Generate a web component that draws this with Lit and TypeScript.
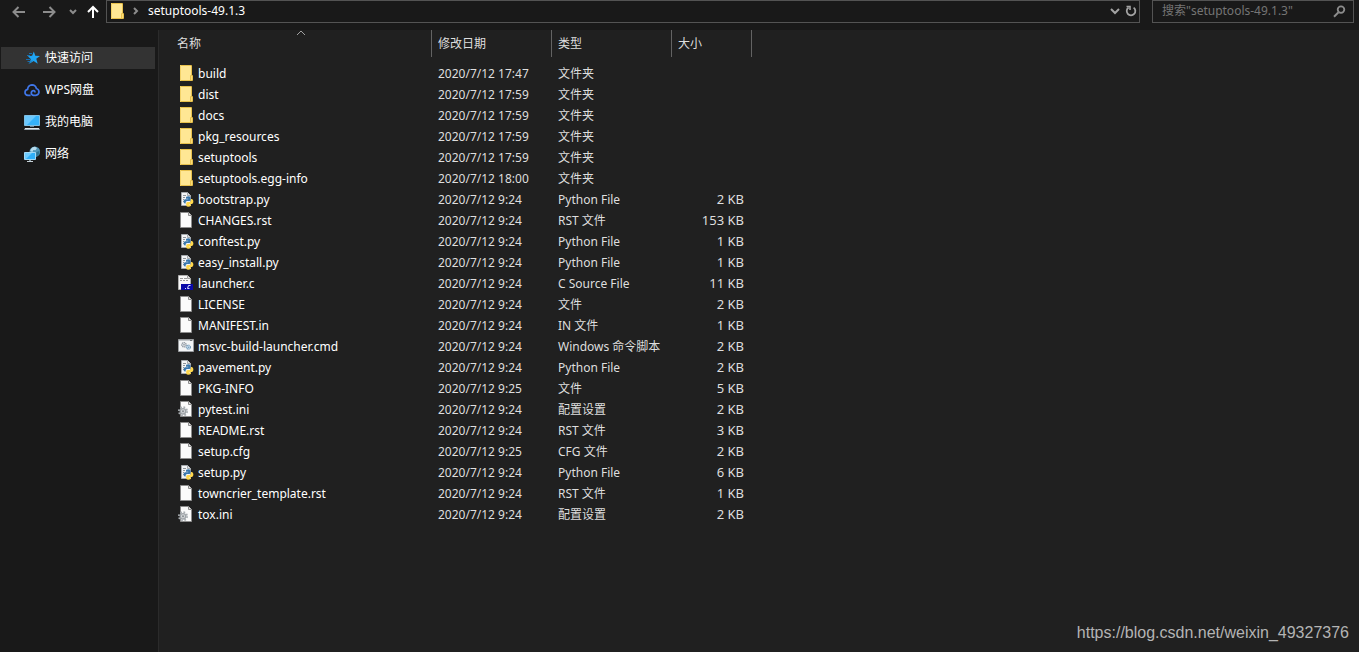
import { LitElement, html, svg, css, nothing, type TemplateResult } from "lit";
import { customElement, property } from "lit/decorators.js";

type IconName = "folder" | "python" | "blank" | "csource" | "script" | "config" | "star" | "cloud" | "computer" | "network";

interface FileEntry {
  name: string;
  modified: string;
  type: string;
  size: string;
  icon: IconName;
}

const page = svg`
  <path d="M2.5 .5H10.5L13.5 3.5V15.5H2.5Z" fill="#fbfbfb" stroke="#8d8d8d"/>
  <path d="M10.5 .5V3.5H13.5" fill="#e4e4e4" stroke="#8d8d8d"/>`;

const icons: Record<IconName, TemplateResult> = {
  folder: svg`
    <path d="M2 0H13V16H2Z" fill="#ffe794"/>
    <path d="M2 .5H13.5V10M2 15.5H14.5V10.5H12.5V15" fill="none" stroke="#e8c14c"/>
    <path d="M2.5 0V16" stroke="#f3d268"/>
    <path d="M13 11H14V15H13Z" fill="#fbdc78"/>`,
  python: svg`
    <path d="M3.5 1.5H9.5L12.5 4.5V14.5H3.5Z" fill="#f4f5f6" stroke="#a5a9ad"/>
    <path d="M9.5 1.5V4.5H12.5" fill="#dfe2e5" stroke="#a5a9ad"/>
    <path d="M5 4.5H8M5 6.5H7M5 8.5H6M5 10.5H6" stroke="#8e949a"/>
    <path d="M9.2 5.5Q11.8 5 12.5 6.4V9Q12.4 10.1 11.2 10.1H9Q7.6 10.2 7.6 11.8V12.6H6.8Q5.4 12.1 5.6 9.9Q5.8 8.3 7.2 8.2H10.3V7.7H8V6.5Q8 5.7 9.2 5.5Z" fill="#3977ad"/>
    <path d="M12.9 8H14Q15.4 8.5 15.4 10.8Q15.3 12.7 13.9 12.9H10.9V13.4H13V14.5Q12.7 15.6 10.8 15.7Q8.3 15.7 8.2 14.4V12.2Q8.3 11 9.5 10.9H11.7Q12.9 10.7 12.9 9.4Z" fill="#ffd84d"/>`,
  blank: page,
  csource: svg`
    <path d="M.5 .5H9.5L12.5 3.5V14.5H.5Z" fill="#f8f8f8" stroke="#b0b0b0"/>
    <path d="M9.5 .5V3.5H12.5" fill="#dedede" stroke="#a0a0a0"/>
    <path d="M2 3.5H5M6 3.5H9M2 5.5H4M5 5.5H7M8 5.5H10" stroke="#9a9a9a"/>
    <path d="M3 9H15V15H3Z" fill="#0909a8"/>
    <path d="M12.5 10.5H10.5L9.5 13.5H11.5M7 13.5H8" fill="none" stroke="#d9dcff"/>`,
  script: svg`
    <path d="M.5 1.5H15.5V13.5H.5Z" fill="#f3f5f6" stroke="#9a9da0"/>
    <path d="M1 2.5H15" stroke="#c3c7ca"/>
    <path d="M12 2.5H14" stroke="#6f7478"/>
    <circle cx="6" cy="6.8" r="2.2" fill="#dfe4e8" stroke="#899199" stroke-width="1.2" stroke-dasharray="1.2 .6"/>
    <circle cx="6" cy="6.8" r=".8" fill="#8a9299"/>
    <circle cx="10.4" cy="9.2" r="2" fill="#cde2f2" stroke="#6f97b6" stroke-width="1.2" stroke-dasharray="1.1 .6"/>
    <circle cx="10.4" cy="9.2" r=".7" fill="#6f97b6"/>`,
  config: svg`
    ${page}
    <circle cx="5" cy="10.3" r="4.1" fill="none" stroke="#a9aeb2" stroke-width="1.8" stroke-dasharray="1.7 1.52"/>
    <circle cx="5" cy="10.3" r="2.7" fill="#d9dcde" stroke="#a0a5a9" stroke-width="1.4"/>
    <circle cx="5" cy="10.3" r="1.1" fill="#8b9094"/>`,
  star: svg`
    <path d="M9.8 1.4L11.3 5.7L16 5.9L12.3 8.7L13.7 13.7L9.6 10.9L5.4 13.8L6.8 9L3.8 6.3L8.1 5.8Z" fill="#1fa5f4"/>
    <path d="M5 3.5H8M3 5.5H6M2 9.5H6M3.5 11.5H6M5 13.5L8 10.5" stroke="#176fae"/>`,
  cloud: svg`
    <path d="M6.6 13.4H4Q1 13.1 1 10.2Q1.1 7.7 3.6 7.3Q4.1 3.1 8 2.9Q11.6 3 12.4 6.5Q15.1 7.3 15 10.2Q14.7 13.1 11.8 13.4H9.5Q7.2 12.9 7.3 10.7Q7.7 8.4 9.9 8.6Q11.1 9 11 10.5" fill="none" stroke="#3f76e8" stroke-width="1.7"/>`,
  computer: svg`
    <path d="M.5 1.5H15.5V11.5H.5Z" fill="#35b2fa" stroke="#7fbfe3"/>
    <path d="M1 2H12L3 11H1Z" fill="#6bc8fd"/>
    <path d="M6 12H10V13H6Z" fill="#6d8797"/>
    <path d="M1 14H15L16 16H0Z" fill="#9aa9b2"/>
    <path d="M1 14.5H15" stroke="#dfe7eb"/>`,
  network: svg`
    <circle cx="10.8" cy="5.7" r="5.3" fill="#5296b7"/>
    <path d="M7 3Q8.4 .7 11 .8L13 2L11.5 4.2L9.3 4L8.4 6L6.2 5Z" fill="#b7dced"/>
    <path d="M12.3 6L15.5 5Q15.8 8.8 12.4 10.5Z" fill="#2c718f"/>
    <path d="M.5 6.5H11.5V13.5H.5Z" fill="#2eaef7" stroke="#a2d9f6"/>
    <path d="M1 7H8L2 13H1Z" fill="#6fcbfd"/>
    <path d="M5 14H7V15H5Z" fill="#82939d"/>
    <path d="M3 15.5H9" stroke="#c8d3d9"/>`,
};

const drawIcon = (name: IconName) =>
  html`<svg class="icon" viewBox="0 0 16 16" aria-hidden="true">${icons[name]}</svg>`;

const entry = (name: string, icon: IconName, type: string, time: string, size = ""): FileEntry => ({
  name,
  icon,
  type,
  modified: `2020/7/12 ${time}`,
  size,
});

const entries: FileEntry[] = [
  entry("build", "folder", "文件夹", "17:47"),
  entry("dist", "folder", "文件夹", "17:59"),
  entry("docs", "folder", "文件夹", "17:59"),
  entry("pkg_resources", "folder", "文件夹", "17:59"),
  entry("setuptools", "folder", "文件夹", "17:59"),
  entry("setuptools.egg-info", "folder", "文件夹", "18:00"),
  entry("bootstrap.py", "python", "Python File", "9:24", "2 KB"),
  entry("CHANGES.rst", "blank", "RST 文件", "9:24", "153 KB"),
  entry("conftest.py", "python", "Python File", "9:24", "1 KB"),
  entry("easy_install.py", "python", "Python File", "9:24", "1 KB"),
  entry("launcher.c", "csource", "C Source File", "9:24", "11 KB"),
  entry("LICENSE", "blank", "文件", "9:24", "2 KB"),
  entry("MANIFEST.in", "blank", "IN 文件", "9:24", "1 KB"),
  entry("msvc-build-launcher.cmd", "script", "Windows 命令脚本", "9:24", "2 KB"),
  entry("pavement.py", "python", "Python File", "9:24", "2 KB"),
  entry("PKG-INFO", "blank", "文件", "9:25", "5 KB"),
  entry("pytest.ini", "config", "配置设置", "9:24", "2 KB"),
  entry("README.rst", "blank", "RST 文件", "9:24", "3 KB"),
  entry("setup.cfg", "blank", "CFG 文件", "9:25", "2 KB"),
  entry("setup.py", "python", "Python File", "9:24", "6 KB"),
  entry("towncrier_template.rst", "blank", "RST 文件", "9:24", "1 KB"),
  entry("tox.ini", "config", "配置设置", "9:24", "2 KB"),
];

const shared = css`
  * {
    box-sizing: border-box;
  }
  .icon {
    display: block;
    flex: none;
    width: 16px;
    height: 16px;
  }
  button {
    display: flex;
    align-items: center;
    justify-content: center;
    padding: 0;
    border: 0;
    background: none;
    color: inherit;
    font: inherit;
  }
`;

@customElement("address-bar")
export class AddressBar extends LitElement {
  @property() folder = "";

  static styles = [
    shared,
    css`
      :host {
        display: flex;
        align-items: flex-start;
        height: 30px;
        padding-right: 5px;
        color: #8c8c8c;
      }
      .nav {
        display: flex;
        width: 106px;
        height: 23px;
        padding-left: 4px;
      }
      .nav button {
        width: 30px;
      }
      .nav .recent {
        width: 17px;
      }
      .nav .up {
        width: 24px;
        color: #ffffff;
      }
      .box {
        display: flex;
        align-items: center;
        height: 23px;
        padding-bottom: 1px;
        border: 1px solid #535353;
      }
      .path {
        flex: 1;
        min-width: 0;
        padding-left: 2px;
      }
      .crumb {
        margin: 0 9px 0 8px;
      }
      .folder {
        flex: 1;
        justify-content: flex-start;
        color: #ffffff;
      }
      .tool {
        width: 16px;
        height: 20px;
        color: #a3a3a3;
      }
      .search {
        width: 202px;
        margin-left: 12px;
        padding-right: 7px;
        padding-left: 9px;
      }
      .search input {
        flex: 1;
        min-width: 0;
        padding: 0;
        border: 0;
        outline: 0;
        background: none;
        color: #ffffff;
        font: inherit;
      }
      .search input::placeholder {
        color: #757575;
        opacity: 1;
      }
      .stroke {
        display: block;
        fill: none;
        stroke: currentColor;
        stroke-width: 2;
      }
    `,
  ];

  render() {
    return html`
      <nav class="nav" aria-label="导航">
        <button aria-label="后退">
          <svg class="stroke" width="14" height="12" viewBox="0 0 14 12"><path d="M13 6H2M6.5 1L1.5 6L6.5 11" /></svg>
        </button>
        <button aria-label="前进">
          <svg class="stroke" width="14" height="12" viewBox="0 0 14 12"><path d="M1 6H12M7.5 1L12.5 6L7.5 11" /></svg>
        </button>
        <button class="recent" aria-label="最近浏览的位置">
          <svg class="stroke" width="8" height="6" viewBox="0 0 8 6"><path d="M1 1L4 4L7 1" /></svg>
        </button>
        <button class="up" aria-label="上移">
          <svg class="stroke" width="12" height="14" viewBox="0 0 12 14"><path d="M6 13V2M1 7L6 2L11 7" /></svg>
        </button>
      </nav>
      <div class="box path">
        ${drawIcon("folder")}
        <svg class="stroke crumb" width="6" height="8" viewBox="0 0 6 8"><path d="M1 1L4 4L1 7" /></svg>
        <button class="folder">${this.folder}</button>
        <button class="tool" aria-label="以前的位置">
          <svg class="stroke" width="10" height="7" viewBox="0 0 10 7"><path d="M1 1L5 5L9 1" /></svg>
        </button>
        <button class="tool" aria-label="刷新">
          <svg class="stroke" width="12" height="12" viewBox="0 0 12 12">
            <path d="M8.6 2.6A4.3 4.3 0 1 1 3.6 2.5" stroke-width="1.8" />
            <path d="M1.5 1.5H5V5" stroke-width="1.6" />
          </svg>
        </button>
      </div>
      <form class="box search" role="search">
        <input type="search" aria-label="搜索" placeholder=${`搜索"${this.folder}"`} />
        <button type="button" aria-label="开始搜索">
          <svg class="stroke" width="13" height="13" viewBox="0 0 13 13">
            <circle cx="8" cy="4.6" r="3.3" stroke-width="1.8" />
            <path d="M5.5 7.2L1 11.8" />
          </svg>
        </button>
      </form>
    `;
  }
}

@customElement("side-nav")
export class SideNav extends LitElement {
  static styles = [
    shared,
    css`
      :host {
        display: block;
        width: 159px;
        padding: 17px 3px 0 1px;
        border-right: 1px solid #2b2b2b;
      }
      .list {
        display: grid;
        gap: 10px;
        margin: 0;
        padding: 0;
        list-style: none;
      }
      .link {
        display: flex;
        align-items: center;
        gap: 5px;
        height: 22px;
        padding-left: 23px;
        color: #ffffff;
        text-decoration: none;
      }
      .link.current {
        background: #333333;
      }
    `,
  ];

  render() {
    const places: [IconName, string][] = [
      ["star", "快速访问"],
      ["cloud", "WPS网盘"],
      ["computer", "我的电脑"],
      ["network", "网络"],
    ];
    return html`
      <ul class="list">
        ${places.map(
          ([icon, text], i) => html`
            <li>
              <a class="link ${i === 0 ? "current" : ""}" href="#" aria-current=${i === 0 ? "page" : nothing}>
                ${drawIcon(icon)}<span>${text}</span>
              </a>
            </li>
          `,
        )}
      </ul>
    `;
  }
}

@customElement("file-list")
export class FileList extends LitElement {
  @property({ attribute: false }) files: FileEntry[] = [];

  static styles = [
    shared,
    css`
      :host {
        display: block;
      }
      .table {
        width: 593px;
        table-layout: fixed;
        border-collapse: separate;
        border-spacing: 0;
      }
      .col-name {
        width: 273px;
      }
      .col-mid {
        width: 120px;
      }
      .col-size {
        width: 80px;
      }
      th {
        position: relative;
        height: 27px;
        padding: 0 0 0 6px;
        border-right: 1px solid #636363;
        color: #dedede;
        font-weight: 400;
        text-align: left;
      }
      th:first-child {
        padding-left: 18px;
      }
      .sort {
        position: absolute;
        top: 0;
        left: 50%;
        display: block;
        fill: none;
        stroke: #a0a0a0;
      }
      .spacer td {
        height: 6px;
        padding: 0;
      }
      td {
        height: 21px;
        padding: 1px 0 0 6px;
        color: #dedede;
        vertical-align: top;
        white-space: nowrap;
      }
      .file {
        display: flex;
        align-items: flex-start;
        gap: 4px;
        padding-left: 13px;
        color: #ffffff;
      }
      .file .icon {
        margin-top: 1px;
      }
      .size {
        padding: 0 8px 0 0;
        font-size: 13px;
        text-align: right;
      }
    `,
  ];

  render() {
    return html`
      <table class="table">
        <colgroup>
          <col class="col-name" />
          <col class="col-mid" />
          <col class="col-mid" />
          <col class="col-size" />
        </colgroup>
        <thead>
          <tr>
            <th scope="col" aria-sort="ascending">
              名称
              <svg class="sort" width="12" height="6" viewBox="0 0 12 6"><path d="M2 5L6 1L10 5" /></svg>
            </th>
            <th scope="col">修改日期</th>
            <th scope="col">类型</th>
            <th scope="col">大小</th>
          </tr>
        </thead>
        <tbody>
          <tr class="spacer" aria-hidden="true"><td colspan="4"></td></tr>
          ${this.files.map(
            (f) => html`
              <tr>
                <td><span class="file">${drawIcon(f.icon)}<span>${f.name}</span></span></td>
                <td>${f.modified}</td>
                <td>${f.type}</td>
                <td class="size">${f.size}</td>
              </tr>
            `,
          )}
        </tbody>
      </table>
    `;
  }
}

@customElement("app-root")
export class AppRoot extends LitElement {
  static styles = [
    shared,
    css`
      :host {
        position: relative;
        display: flex;
        flex-direction: column;
        min-height: 100vh;
        background: #191919;
        color: #ffffff;
        font-family: "Noto Sans", "Noto Sans CJK SC", sans-serif;
        font-size: 12px;
        line-height: 20px;
      }
      .body {
        display: flex;
        flex: 1;
      }
      .content {
        flex: 1;
        min-width: 0;
        background: #202020;
      }
      .credit {
        position: absolute;
        right: 10px;
        bottom: 9px;
        color: #b4b4b4;
        font-family: "Liberation Sans", Arial, sans-serif;
        font-size: 16px;
      }
    `,
  ];

  render() {
    return html`
      <address-bar folder="setuptools-49.1.3"></address-bar>
      <div class="body">
        <side-nav></side-nav>
        <main class="content">
          <file-list .files=${entries}></file-list>
        </main>
      </div>
      <span class="credit">https://blog.csdn.net/weixin_49327376</span>
    `;
  }
}
